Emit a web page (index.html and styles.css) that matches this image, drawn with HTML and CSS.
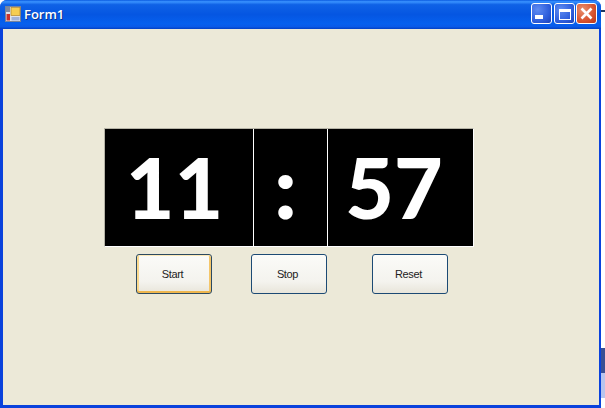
FILE: index.html
```html
<!DOCTYPE html>
<html lang="en">
<head>
<meta charset="utf-8">
<title>Form1</title>
<link rel="stylesheet" href="styles.css">
</head>
<body>
<div class="window">
  <header class="titlebar">
    <svg class="app-icon" width="16" height="16" viewBox="0 0 16 16">
      <rect x="0.5" y="0.5" width="15" height="15" fill="#dfe3ea" stroke="#76849c"/>
      <rect x="1" y="1" width="4" height="5" fill="#7f8aa0"/>
      <rect x="6" y="1.5" width="9" height="8" fill="#f6cd52" stroke="#b5852a" stroke-width="0.7"/>
      <rect x="1.5" y="8" width="3.5" height="6.5" fill="#c8322c"/>
      <rect x="6.5" y="11" width="8" height="3.5" fill="#a3b2d8"/>
    </svg>
    <span class="title">Form1</span>
    <div class="controls">
      <button class="ctl ctl-blue" aria-label="Minimize">
        <svg width="21" height="21" viewBox="0 0 21 21"><rect x="4" y="12" width="8" height="4" fill="#fff"/></svg>
      </button>
      <button class="ctl ctl-blue" aria-label="Maximize">
        <svg width="21" height="21" viewBox="0 0 21 21"><path d="M5 6h12v11H5z M6 9v7h10V9z" fill="#fff" fill-rule="evenodd"/></svg>
      </button>
      <button class="ctl ctl-red" aria-label="Close">
        <svg width="21" height="21" viewBox="0 0 21 21"><path d="M5.5 5.5l10 10M15.5 5.5l-10 10" stroke="#fff" stroke-width="2.6" fill="none"/></svg>
      </button>
    </div>
  </header>
  <main class="client">
    <div class="clock">
      <div class="cell cell-hours">11</div>
      <div class="cell cell-sep">:</div>
      <div class="cell cell-mins">57</div>
    </div>
    <div class="actions">
      <button class="btn btn-default">Start</button>
      <button class="btn btn-stop">Stop</button>
      <button class="btn btn-reset">Reset</button>
    </div>
  </main>
</div>
<div class="edge">
  <div class="edge-gap-a"></div>
  <div class="edge-mark"></div>
  <div class="edge-gap-b"></div>
  <div class="edge-dark"></div>
  <div class="edge-light"></div>
</div>
</body>
</html>
```
FILE: styles.css
```css
* { box-sizing: border-box; }
html, body { margin: 0; padding: 0; }
body {
  width: 605px;
  height: 408px;
  overflow: hidden;
  display: flex;
  background: #fff;
  font-family: "Liberation Sans", Arial, sans-serif;
}
.window {
  width: 601px;
  height: 408px;
  flex: none;
  display: flex;
  flex-direction: column;
  border-radius: 7px 7px 0 0;
  background: #0a42dc;
  overflow: hidden;
}
.titlebar {
  height: 29px;
  flex: none;
  display: flex;
  align-items: center;
  padding: 0 4px 2px 5px;
  background: linear-gradient(180deg, #0a5ae0 0%, #3a93ff 6%, #0f62e6 16%, #0556e2 50%, #0660ee 82%, #0a5ae8 92%, #0340c4 100%);
}
.app-icon { flex: none; }
.title {
  margin-left: 3px;
  color: #fff;
  font: 600 13px "Open Sans", sans-serif;
  text-shadow: 1px 1px 0 #0a3590;
}
.controls { margin-left: auto; display: flex; gap: 1.5px; }
.ctl {
  width: 21px;
  height: 21px;
  padding: 0;
  border: 1px solid #fff;
  border-radius: 3px;
  display: block;
  position: relative;
}
.ctl svg { position: absolute; left: -1px; top: -1px; }
.ctl-blue { background: radial-gradient(circle at 30% 30%, #5f8cf2 0%, #2f5fdc 60%, #1b3fb8 100%); }
.ctl-red { background: radial-gradient(circle at 30% 30%, #e8906f 0%, #d8532f 60%, #b8361a 100%); }
.client {
  flex: 1;
  margin: 0 2px 3px 3px;
  background: #ece9d8;
  padding-top: 99px;
}
.clock {
  margin-left: 101px;
  width: 370px;
  height: 119px;
  display: flex;
  background: #000;
  border-top: 1px solid #b5b3a6;
  border-right: 1px solid #fff;
  border-bottom: 1px solid #fff;
  border-left: 1px solid #b5b3a6;
}
.cell {
  color: #fff;
  font: 900 84px/1 Lato, sans-serif;
  display: flex;
  align-items: center;
  justify-content: center;
  padding: 0 13px 2px 0;
}
.cell-hours { width: 149px; border-right: 1px solid #fff; padding-right: 9px; }
.cell-sep {
  width: 74px;
  border-right: 1px solid #fff;
  font-size: 88px;
  padding: 0 10px 5px 0;
}
.cell-mins { flex: 1; }
.actions {
  display: flex;
  margin: 7px 0 0 133px;
}
.btn {
  width: 76px;
  height: 40px;
  padding: 0 3px 0 0;
  border: 1px solid #1c4a74;
  border-radius: 3px;
  background: linear-gradient(180deg, #fbfbf8 0%, #f4f3ee 70%, #e8e5da 100%);
  color: #222;
  font: 11px "Liberation Sans", Arial, sans-serif;
  letter-spacing: -0.35px;
}
.btn-default {
  border-color: #2c4a60;
  box-shadow: inset 0 1px 0 #fde9b8, inset 0 -2px 0 #eeb64e, inset 2px 0 0 #fad98e, inset -2px 0 0 #f4c66a;
}
.btn-stop { margin-left: 39px; }
.btn-reset { margin-left: 45px; }
.edge {
  flex: 1;
  display: flex;
  flex-direction: column;
}
.edge-gap-a { height: 10px; }
.edge-mark { height: 2px; background: #1d3760; }
.edge-gap-b { height: 336px; }
.edge-dark { height: 25px; background: #3a4f94; }
.edge-light { height: 25px; background: #b8c4ee; }
```
